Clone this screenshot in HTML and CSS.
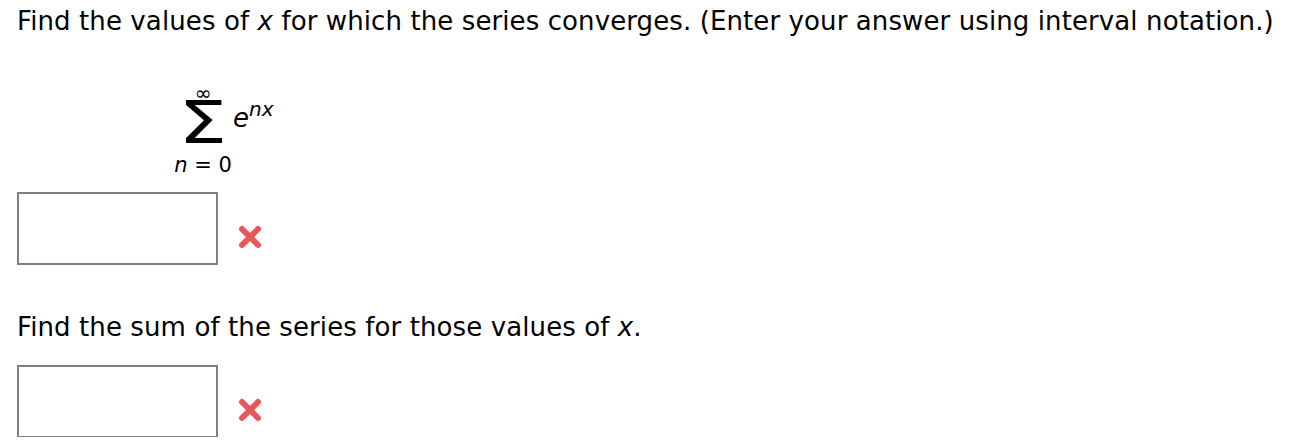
FILE: index.html
```html
<!DOCTYPE html>
<html>
<head>
<meta charset="utf-8">
<link rel="stylesheet" href="styles.css">
</head>
<body>
<div class="page">
  <p class="q">Find the values of <i>x</i> for which the series converges. (Enter your answer using interval notation.)</p>
  <div class="formula">
    <div class="sigma">
      <span class="top">∞</span>
      <span class="sym">Σ</span>
      <span class="bot"><i>n</i> = 0</span>
    </div>
    <div class="term"><i>e</i><sup><i>nx</i></sup></div>
  </div>
  <div class="answer">
    <div class="box"></div>
    <svg class="wrong" width="26" height="26" viewBox="0 0 26 26"><path d="M5 5 L21 21 M21 5 L5 21" stroke="#e8585b" stroke-width="6" stroke-linecap="round" fill="none"/></svg>
  </div>
  <p class="q q2">Find the sum of the series for those values of <i>x</i>.</p>
  <div class="answer a2">
    <div class="box"></div>
    <svg class="wrong" width="26" height="26" viewBox="0 0 26 26"><path d="M5 5 L21 21 M21 5 L5 21" stroke="#e8585b" stroke-width="6" stroke-linecap="round" fill="none"/></svg>
  </div>
</div>
</body>
</html>
```
FILE: styles.css
```css
html, body { margin: 0; padding: 0; background: #fff; }
body { font-family: "DejaVu Sans", Verdana, sans-serif; color: #000; }
.page { padding: 5px 0 0 17px; }
.q { margin: 0; font-size: 26px; line-height: 32px; letter-spacing: 0.1px; white-space: nowrap; }
.formula { display: flex; align-items: flex-start; margin: 49px 0 0 156px; height: 101px; }
.sigma { display: flex; flex-direction: column; align-items: center; width: 60px; }
.top { font-size: 20px; line-height: 14px; height: 14px; }
.sym { font-size: 59px; line-height: 46px; height: 46px; transform: scaleX(1.3); }
.bot { font-size: 21px; line-height: 24px; margin-top: 7px; white-space: nowrap; }
.term { font-size: 26px; line-height: 30px; margin-top: 17px; margin-left: 0; }
.term sup { font-size: 20px; line-height: 0; vertical-align: 11px; }
.answer { display: flex; align-items: flex-start; margin-top: 5px; height: 72px; }
.box { box-sizing: border-box; width: 201px; height: 73px; border: 2px solid #7f7f7f; }
.wrong { margin: 32px 0 0 19px; filter: blur(0.4px); }
.q2 { margin-top: 47px; }
.a2 { margin-top: 22px; }
```
